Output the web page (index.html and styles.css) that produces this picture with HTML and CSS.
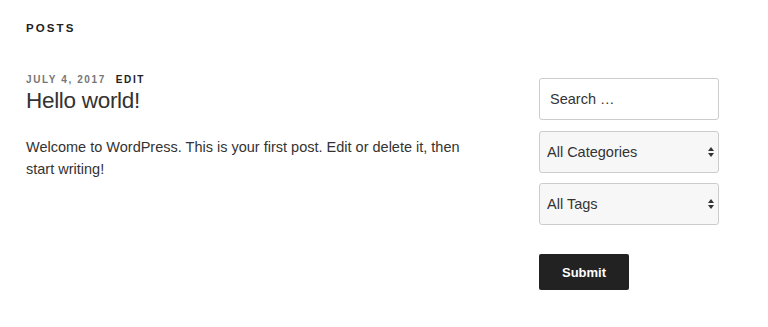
FILE: index.html
```html
<!DOCTYPE HTML>
<html>
<head>
    <meta charset="UTF-8">
    <title>Posts</title>
    <link rel="stylesheet" href="styles.css">
</head>
<body>
    <div class="wrap">
        <h2 class="page-title">Posts</h2>
        <div class="content">
            <main class="primary">
                <article class="post">
                    <div class="entry-meta"><span class="posted-on">July 4, 2017</span><span class="edit-link">Edit</span></div>
                    <h3 class="entry-title">Hello world!</h3>
                    <p class="entry-content">Welcome to WordPress. This is your first post. Edit or delete it, then start writing!</p>
                </article>
            </main>
            <aside class="sidebar">
                <form class="search-form">
                    <input type="search" class="search-field" placeholder="Search &hellip;">
                    <div class="select-wrap">
                        <select class="dropdown">
                            <option>All Categories</option>
                        </select>
                        <svg class="arrows" width="6" height="10" viewBox="0 0 6 10"><path d="M3 0 L6 4 L0 4 Z M3 10 L6 6 L0 6 Z" fill="#333333"/></svg>
                    </div>
                    <div class="select-wrap">
                        <select class="dropdown">
                            <option>All Tags</option>
                        </select>
                        <svg class="arrows" width="6" height="10" viewBox="0 0 6 10"><path d="M3 0 L6 4 L0 4 Z M3 10 L6 6 L0 6 Z" fill="#333333"/></svg>
                    </div>
                    <button type="button" class="submit">Submit</button>
                </form>
            </aside>
        </div>
    </div>
</body>
</html>
```

FILE: styles.css
```css
body {margin: 0; font-family: "Liberation Sans", Arial, sans-serif; color: #333333; background: #ffffff;}
.wrap {padding: 22px 26px 0;}
.page-title {margin: 0; font-size: 11.5px; font-weight: 800; letter-spacing: 2.1px; text-transform: uppercase; color: #222222; line-height: 12px;}
.content {display: flex; margin-top: 39px;}
.primary {width: 440px;}
.entry-meta {font-size: 10px; font-weight: 800; letter-spacing: 1.6px; text-transform: uppercase; line-height: 14px;}
.posted-on {color: #767676;}
.edit-link {color: #222222; margin-left: 10px;}
.entry-title {margin: 1px 0 0; font-size: 22.5px; font-weight: 400; letter-spacing: -0.3px; line-height: 26px; color: #333333;}
.entry-content {margin: 22px 0 0; font-size: 14.5px; line-height: 22px; color: #333333;}
.sidebar {margin-left: 73px; width: 180px;}
.search-form {display: flex; flex-direction: column; align-items: flex-start; margin-top: 5px;}
.search-field, .dropdown {box-sizing: border-box; width: 180px; height: 42px; border: 1px solid #cccccc; border-radius: 3px; font-family: inherit; font-size: 14.5px; color: #333333; padding: 0 10px; margin: 0;}
.search-field {background: #ffffff; margin-bottom: 11px;}
.search-field::placeholder {color: #333333;}
.select-wrap {position: relative; margin-bottom: 10px;}
.dropdown {display: block; appearance: none; -webkit-appearance: none; background: #f7f7f7; padding-left: 7px;}
.arrows {position: absolute; right: 5px; top: 16px;}
.submit {margin-top: 19px; width: 90px; height: 36px; background: #222222; color: #ffffff; border: none; border-radius: 2px; font-family: inherit; font-size: 13px; font-weight: 800;}
```
